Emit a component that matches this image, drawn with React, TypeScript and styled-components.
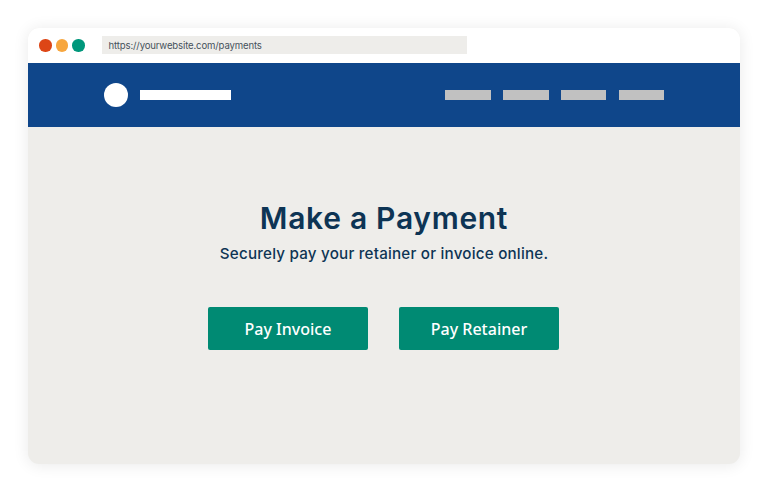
import styled, { createGlobalStyle } from 'styled-components';

const GlobalStyle = createGlobalStyle`
  html, body {
    margin: 0;
    padding: 0;
    background: #ffffff;
  }
`;

const Page = styled.div`
  width: 768px;
  height: 492px;
  padding: 28px;
  box-sizing: border-box;
  overflow: hidden;
`;

const BrowserWindow = styled.div`
  width: 712px;
  height: 436px;
  display: flex;
  flex-direction: column;
  border-radius: 11px;
  overflow: hidden;
  background: #eeedea;
  box-shadow: 0 1px 16px rgba(0, 0, 0, 0.09);
`;

const TitleBar = styled.div`
  height: 34.5px;
  flex: none;
  display: flex;
  align-items: center;
  padding-left: 11px;
  background: #ffffff;
`;

const Dots = styled.div`
  display: flex;
  gap: 4px;
  margin-right: 17px;
`;

const Dot = styled.span<{ $color: string }>`
  width: 12.5px;
  height: 12.5px;
  border-radius: 50%;
  background: ${(props) => props.$color};
`;

const AddressBar = styled.div`
  width: 365px;
  height: 18px;
  padding-left: 7px;
  box-sizing: border-box;
  background: #eeedea;
  color: #46525c;
  font: 400 9.6px/20px 'Inter', sans-serif;
  letter-spacing: -0.15px;
`;

const Header = styled.header`
  height: 64.5px;
  flex: none;
  display: flex;
  align-items: center;
  justify-content: space-between;
  padding: 0 76px;
  background: #0f468a;
`;

const Brand = styled.div`
  display: flex;
  align-items: center;
  gap: 12px;
`;

const LogoMark = styled.span`
  width: 24px;
  height: 24px;
  border-radius: 50%;
  background: #ffffff;
`;

const LogoText = styled.span`
  width: 91px;
  height: 9.5px;
  background: #ffffff;
`;

const Nav = styled.nav`
  display: flex;
  gap: 12.2px;
`;

const NavItem = styled.span`
  width: 45.5px;
  height: 9.5px;
  background: #c1c1c1;
`;

const Main = styled.main`
  flex: 1;
  display: flex;
  flex-direction: column;
  align-items: center;
  padding-top: 72.5px;
`;

const Title = styled.h1`
  margin: 0;
  color: #0d3454;
  font: 600 30px/36px 'Inter', sans-serif;
  letter-spacing: 0.7px;
`;

const Subtitle = styled.p`
  margin: 8.5px 0 0;
  color: #0d3454;
  font: 450 15.2px/20px 'Inter', sans-serif;
  letter-spacing: 0.21px;
`;

const Actions = styled.div`
  display: flex;
  gap: 31px;
  margin: 43px 1px 0 0;
`;

const PayButton = styled.button`
  width: 160px;
  height: 42.5px;
  padding: 1px 0 0;
  border: none;
  border-radius: 2px;
  background: #008a73;
  color: #ffffff;
  font: 500 16px/1 'Noto Sans', sans-serif;
  letter-spacing: 0;
`;

export default function App() {
  return (
    <Page>
      <GlobalStyle />
      <BrowserWindow>
        <TitleBar>
          <Dots>
            <Dot $color="#dd4616" />
            <Dot $color="#f7a63e" />
            <Dot $color="#00977b" />
          </Dots>
          <AddressBar>https://yourwebsite.com/payments</AddressBar>
        </TitleBar>
        <Header>
          <Brand>
            <LogoMark />
            <LogoText />
          </Brand>
          <Nav>
            <NavItem />
            <NavItem />
            <NavItem />
            <NavItem />
          </Nav>
        </Header>
        <Main>
          <Title>Make a Payment</Title>
          <Subtitle>Securely pay your retainer or invoice online.</Subtitle>
          <Actions>
            <PayButton>Pay Invoice</PayButton>
            <PayButton>Pay Retainer</PayButton>
          </Actions>
        </Main>
      </BrowserWindow>
    </Page>
  );
}
